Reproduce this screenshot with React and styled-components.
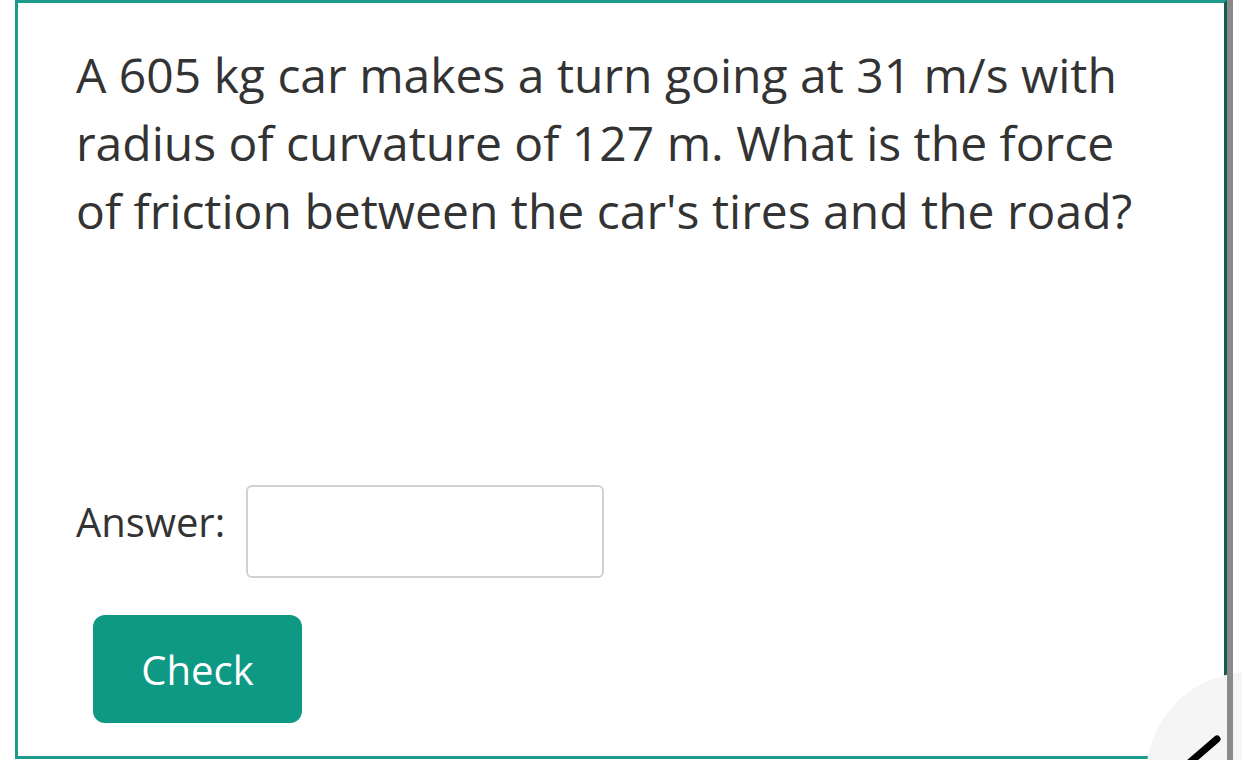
import React from 'react';
import styled, { createGlobalStyle } from 'styled-components';

const GlobalStyle = createGlobalStyle`
  html, body {
    margin: 0;
    padding: 0;
    background: #ffffff;
    overflow: hidden;
  }
  body {
    font-family: "Open Sans", "Noto Sans", sans-serif;
    color: #333333;
  }
`;

const Page = styled.div`
  display: flex;
  height: 760px;
  padding-left: 15px;
  box-sizing: border-box;
`;

const Card = styled.div`
  width: 1212px;
  height: 759px;
  box-sizing: border-box;
  border-top: 3px solid #1e9a8b;
  border-left: 3px solid #1e9a8b;
  border-bottom: 3px solid #1e9a8b;
  border-right: 3px solid #175a50;
  padding: 38px 88px 0 58px;
  display: flex;
  flex-direction: column;
`;

const Question = styled.p`
  margin: 0;
  font-size: 48px;
  line-height: 68px;
  color: #333333;
`;

const AnswerRow = styled.div`
  display: flex;
  align-items: center;
  gap: 21px;
  margin-top: 240px;
`;

const Label = styled.span`
  font-size: 40px;
  line-height: 54px;
  color: #333333;
  margin-top: -20px;
`;

const AnswerInput = styled.input`
  width: 358px;
  height: 93px;
  box-sizing: border-box;
  border: 2px solid #cfd1d5;
  border-radius: 6px;
  background: #ffffff;
  font-family: inherit;
  font-size: 36px;
  padding: 0 12px;
  outline: none;
`;

const CheckButton = styled.button`
  align-self: flex-start;
  margin: 37px 0 0 17px;
  width: 209px;
  height: 108px;
  border: none;
  border-radius: 12px;
  background: #0e9984;
  color: #ffffff;
  font-family: "Open Sans", "Noto Sans", sans-serif;
  font-size: 40px;
  cursor: pointer;
`;

const ScrollStrip = styled.div`
  position: relative;
  z-index: 2;
  width: 6px;
  height: 760px;
  background: #8a8a8a;
`;

const FloatButton = styled.div`
  position: fixed;
  z-index: 1;
  left: 1146px;
  top: 672px;
  width: 208px;
  height: 208px;
  border-radius: 50%;
  background: #f5f5f5;
`;

const PenStroke = styled.svg`
  position: absolute;
  left: 38px;
  top: 58px;
  width: 40px;
  height: 40px;
`;

export default function App() {
  return (
    <>
      <GlobalStyle />
      <Page>
        <Card>
          <Question>
            A 605 kg car makes a turn going at 31 m/s with radius of curvature of 127 m. What is the force
            of friction between the car's tires and the road?
          </Question>
          <AnswerRow>
            <Label>Answer:</Label>
            <AnswerInput type="text" aria-label="Answer" />
          </AnswerRow>
          <CheckButton>Check</CheckButton>
        </Card>
        <ScrollStrip />
      </Page>
      <FloatButton>
        <PenStroke viewBox="0 0 40 40">
          <line x1="4" y1="34" x2="33" y2="9" stroke="#000" strokeWidth="7" strokeLinecap="round" />
        </PenStroke>
      </FloatButton>
    </>
  );
}
